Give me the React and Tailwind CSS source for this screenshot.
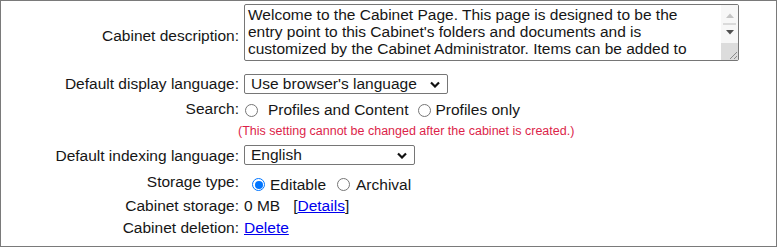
import { useState } from 'react'

const DESCRIPTION =
  "Welcome to the Cabinet Page. This page is designed to be the\nentry point to this Cabinet's folders and documents and is\ncustomized by the Cabinet Administrator. Items can be added to"

function Chevron({ className }) {
  return (
    <svg className={className} width="10" height="7" viewBox="0 0 10 7">
      <path d="M1 1.5 L5 5.5 L9 1.5" fill="none" stroke="#111" strokeWidth="2.2" />
    </svg>
  )
}

function Select({ value, width }) {
  return (
    <div className={`relative ${width} h-[20px] border border-[#767676] rounded-[2px] bg-white flex items-center`}>
      <span className="pl-[6px] leading-none">{value}</span>
      <Chevron className="absolute right-[7px] top-[6px]" />
    </div>
  )
}

function Radio({ checked }) {
  return checked ? (
    <span className="inline-block w-[13px] h-[13px] rounded-full border-[1.5px] border-[#0075ff] bg-white relative shrink-0">
      <span className="absolute inset-[1.5px] rounded-full bg-[#0075ff]" />
    </span>
  ) : (
    <span className="inline-block w-[13px] h-[13px] rounded-full border border-[#767676] bg-white shrink-0" />
  )
}

function Row({ label, children, className = '', labelClass = '' }) {
  return (
    <div className={`flex ${className}`}>
      <div className={`w-[240px] pr-[2px] text-right shrink-0 ${labelClass}`}>{label}</div>
      <div className="flex-1 pl-[3px] flex items-center">{children}</div>
    </div>
  )
}

// textarea with a classic scrollbar column and resize grip
function DescriptionBox() {
  return (
    <div className="flex w-[495px] h-[57px] border border-[#767676] rounded-[2px] bg-white overflow-hidden">
      <textarea
        readOnly
        defaultValue={DESCRIPTION}
        className="flex-1 h-full px-[3px] pt-[1px] text-[15.5px] leading-[17px] resize-none overflow-hidden whitespace-pre outline-none"
      />
      <div className="w-[17px] flex flex-col bg-[#f7f7f7]">
        <div className="flex flex-col items-center pt-[8px] h-[38px]">
          <svg width="8" height="5" viewBox="0 0 8 5">
            <path d="M0 5 L4 0.5 L8 5 Z" fill="#c4c4c4" />
          </svg>
          <div className="mt-[5px] w-[13px] h-[1.5px] bg-[#dadada]" />
          <svg className="mt-[5px]" width="8" height="5" viewBox="0 0 8 5">
            <path d="M0 0 L8 0 L4 4.5 Z" fill="#505050" />
          </svg>
        </div>
        <div className="flex-1 bg-[#dcdcdc] flex items-end justify-end">
          <svg width="11" height="11" viewBox="0 0 11 11">
            <path d="M10 3 L3 10 M10 7 L7 10" stroke="#8a8a8a" strokeWidth="1" />
          </svg>
        </div>
      </div>
    </div>
  )
}

export default function App() {
  const [storage, setStorage] = useState('editable')

  return (
    <div
      className="w-[777px] h-[247px] border border-[#7a7a7a] bg-white text-[#161616] text-[15.5px]"
      style={{ fontFamily: '"Liberation Sans", Arial, sans-serif' }}
    >
      {/* Cabinet description */}
      <Row label="Cabinet description:" className="items-center pt-[3px]" labelClass="pt-[6px]">
        <DescriptionBox />
      </Row>

      {/* Default display language */}
      <Row label="Default display language:" className="items-center mt-[11px]">
        <Select value="Use browser's language" width="w-[204px]" />
      </Row>

      {/* Search */}
      <Row label="Search:" className="items-start mt-[2px]">
        <div className="flex items-center ml-[1px] pt-[4px] leading-[18px]">
          <Radio />
          <span className="ml-[10px]">Profiles and Content</span>
          <span className="ml-[10px] flex"><Radio /></span>
          <span className="ml-[4px]">Profiles only</span>
        </div>
      </Row>

      {/* Note */}
      <div className="pl-[237px] mt-[3px] text-[12.5px] leading-[15px] text-[#dc1f4a]">
        (This setting cannot be changed after the cabinet is created.)
      </div>

      {/* Default indexing language */}
      <Row label="Default indexing language:" className="items-center mt-[5px]">
        <Select value="English" width="w-[171px]" />
      </Row>

      {/* Storage type */}
      <Row label="Storage type:" className="items-start mt-[3px]">
        <div className="flex items-center ml-[8px] pt-[6px] leading-[18px]">
          <button type="button" onClick={() => setStorage('editable')} className="flex">
            <Radio checked={storage === 'editable'} />
          </button>
          <span className="ml-[5px]">Editable</span>
          <button type="button" onClick={() => setStorage('archival')} className="flex ml-[11px]">
            <Radio checked={storage === 'archival'} />
          </button>
          <span className="ml-[6px]">Archival</span>
        </div>
      </Row>

      {/* Cabinet storage */}
      <Row label="Cabinet storage:" className="items-center mt-[2px] leading-[20px]">
        <span>0 MB</span>
        <span className="ml-[13px]">
          [<a href="#" className="text-[#0000ee] underline">Details</a>]
        </span>
      </Row>

      {/* Cabinet deletion */}
      <Row label="Cabinet deletion:" className="items-center mt-[2px] leading-[20px]">
        <a href="#" className="text-[#0000ee] underline">Delete</a>
      </Row>
    </div>
  )
}
